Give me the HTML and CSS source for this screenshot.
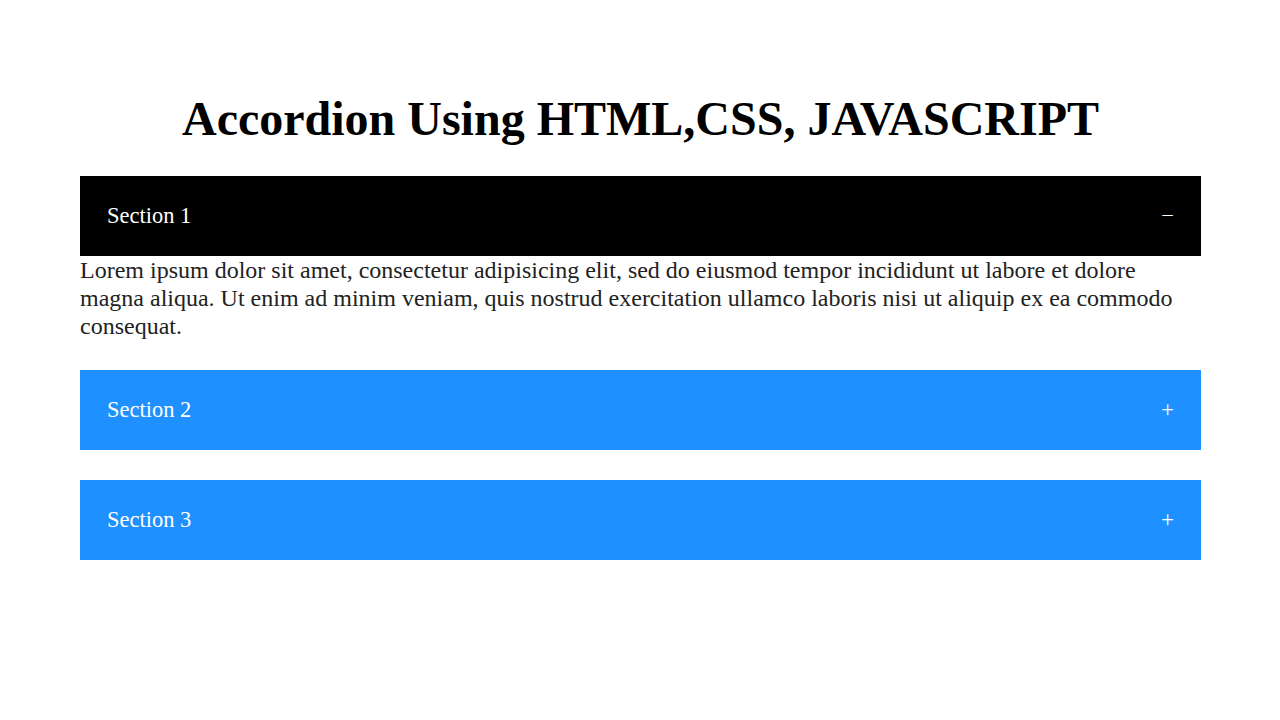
FILE: index.html
```html
<!DOCTYPE html>
<html lang="en">
<head>
    <meta charset="UTF-8">
    <meta name="viewport" content="width=device-width, initial-scale=1">
    <title>Accordion</title>
    <link rel="stylesheet" href="styles.css">
</head>
<body>

<div class="container">
    <h1>Accordion Using HTML,CSS, JAVASCRIPT</h1>

    <div class="accordion">
        <div class="item open">
            <button class="head">Section 1<span class="sign">&minus;</span></button>
            <div class="panel">
                <p>Lorem ipsum dolor sit amet, consectetur adipisicing elit, sed do eiusmod tempor incididunt ut labore et dolore magna aliqua. Ut enim ad minim veniam, quis nostrud exercitation ullamco laboris nisi ut aliquip ex ea commodo consequat.</p>
            </div>
        </div>
        <div class="item">
            <button class="head">Section 2<span class="sign">+</span></button>
            <div class="panel">
                <p>Lorem ipsum dolor sit amet, consectetur adipisicing elit, sed do eiusmod tempor incididunt ut labore et dolore magna aliqua. Ut enim ad minim veniam, quis nostrud exercitation ullamco laboris nisi ut aliquip ex ea commodo consequat.</p>
            </div>
        </div>
        <div class="item">
            <button class="head">Section 3<span class="sign">+</span></button>
            <div class="panel">
                <p>Lorem ipsum dolor sit amet, consectetur adipisicing elit, sed do eiusmod tempor incididunt ut labore et dolore magna aliqua. Ut enim ad minim veniam, quis nostrud exercitation ullamco laboris nisi ut aliquip ex ea commodo consequat.</p>
            </div>
        </div>
    </div>
</div>

<script>
    // 見出しをクリックしたら開閉、記号も切り替える
    document.querySelectorAll('.head').forEach(head => {
        head.addEventListener('click', () => {
            const item = head.parentElement;
            item.classList.toggle('open');
            head.querySelector('.sign').textContent = item.classList.contains('open') ? '\u2212' : '+';
        });
    });
</script>

</body>
</html>
```

FILE: styles.css
```css
body {
    margin: 0;
    font-family: "Liberation Serif", "Times New Roman", serif;
    color: #222;
    background: #fff;
}
.container {
    padding: 0 79px 0 80px;
}
h1 {
    text-align: center;
    font-size: 48px;
    color: #000;
    margin: 91px 0 30px;
    line-height: 55px;
}
.accordion {
    display: flex;
    flex-direction: column;
    gap: 30px;
}
.head {
    display: flex;
    justify-content: space-between;
    align-items: center;
    width: 100%;
    height: 80px;
    padding: 0 27px;
    border: none;
    background-color: #1e90ff;
    color: #fff;
    font-family: inherit;
    font-size: 22.5px;
    text-align: left;
    cursor: pointer;
}
.item.open .head {
    background-color: #000;
}
.sign {
    font-size: 22.5px;
}
.panel {
    display: none;
}
.item.open .panel {
    display: block;
}
.panel p {
    margin: 0;
    font-size: 24px;
    line-height: 28px;
}
```
